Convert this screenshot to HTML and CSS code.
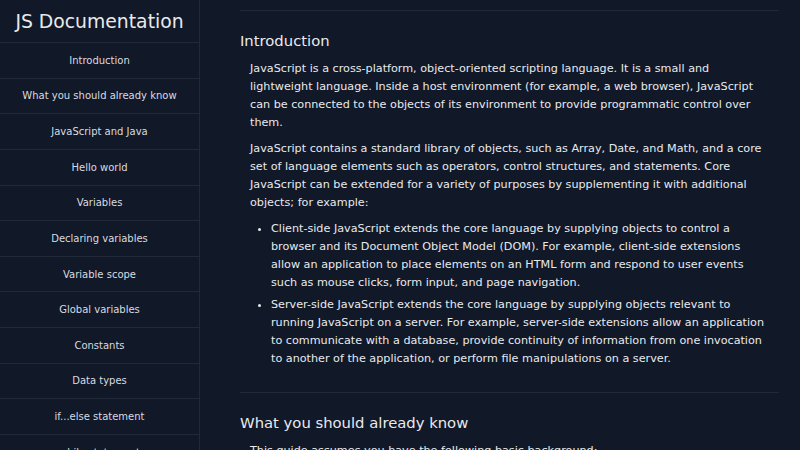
FILE: index.html
```html
<!DOCTYPE html>
<html lang="en">
<head>
<meta charset="utf-8">
<title>JS Documentation</title>
<link rel="stylesheet" href="styles.css">
</head>
<body>
<nav class="sidebar" id="navbar">
  <header class="sidebar-title">JS Documentation</header>
  <ul class="nav-list">
    <li><a class="nav-link" href="#Introduction">Introduction</a></li>
    <li><a class="nav-link" href="#What_you_should_already_know">What you should already know</a></li>
    <li><a class="nav-link" href="#JavaScript_and_Java">JavaScript and Java</a></li>
    <li><a class="nav-link" href="#Hello_world">Hello world</a></li>
    <li><a class="nav-link" href="#Variables">Variables</a></li>
    <li><a class="nav-link" href="#Declaring_variables">Declaring variables</a></li>
    <li><a class="nav-link" href="#Variable_scope">Variable scope</a></li>
    <li><a class="nav-link" href="#Global_variables">Global variables</a></li>
    <li><a class="nav-link" href="#Constants">Constants</a></li>
    <li><a class="nav-link" href="#Data_types">Data types</a></li>
    <li><a class="nav-link" href="#if...else_statement">if...else statement</a></li>
    <li><a class="nav-link" href="#while_statement">while statement</a></li>
    <li><a class="nav-link" href="#Function_declarations">Function declarations</a></li>
    <li><a class="nav-link" href="#Reference">Reference</a></li>
  </ul>
</nav>
<main class="main-doc" id="main-doc">
  <section class="main-section" id="Introduction">
    <h2 class="section-title">Introduction</h2>
    <p class="text">JavaScript is a cross-platform, object-oriented scripting language. It is a small and lightweight language. Inside a host environment (for example, a web browser), JavaScript can be connected to the objects of its environment to provide programmatic control over them.</p>
    <p class="text">JavaScript contains a standard library of objects, such as Array, Date, and Math, and a core set of language elements such as operators, control structures, and statements. Core JavaScript can be extended for a variety of purposes by supplementing it with additional objects; for example:</p>
    <ul class="bullets">
      <li>Client-side JavaScript extends the core language by supplying objects to control a browser and its Document Object Model (DOM). For example, client-side extensions allow an application to place elements on an HTML form and respond to user events such as mouse clicks, form input, and page navigation.</li>
      <li>Server-side JavaScript extends the core language by supplying objects relevant to running JavaScript on a server. For example, server-side extensions allow an application to communicate with a database, provide continuity of information from one invocation to another of the application, or perform file manipulations on a server.</li>
    </ul>
  </section>
  <section class="main-section" id="What_you_should_already_know">
    <h2 class="section-title">What you should already know</h2>
    <p class="text">This guide assumes you have the following basic background:</p>
    <ul class="bullets">
      <li>A general understanding of the Internet and the World Wide Web (WWW).</li>
      <li>Good working knowledge of HyperText Markup Language (HTML).</li>
      <li>Some programming experience. If you are new to programming, try one of the tutorials linked on the main page about JavaScript.</li>
    </ul>
  </section>
</main>
</body>
</html>
```

FILE: styles.css
```css
html, body {
  margin: 0;
  height: 100%;
}

body {
  display: flex;
  overflow: hidden;
  background: #111827;
  color: #e8eaee;
  font-family: "DejaVu Sans", "Noto Sans", sans-serif;
}

.sidebar {
  flex: 0 0 200px;
  box-sizing: border-box;
  border-right: 1px solid #1f2937;
  height: 100%;
  overflow: hidden;
}

.sidebar-title {
  height: 42px;
  display: flex;
  align-items: center;
  justify-content: center;
  font-size: 18.8px;
  color: #e8eaee;
  border-bottom: 1px solid #1f2937;
}

.nav-list {
  list-style: none;
  margin: 0;
  padding: 0;
}

.nav-list li {
  border-bottom: 1px solid #1f2937;
}

.nav-link {
  height: 34.64px;
  display: flex;
  align-items: center;
  justify-content: center;
  font-size: 10px;
  color: #d8dbe0;
  text-decoration: none;
}

.main-doc {
  flex: 1 1 auto;
  height: 100%;
  overflow: hidden;
  padding: 10px 21px 0 40px;
}

.main-section {
  border-top: 1px solid #1f2937;
  padding: 21px 0 24px;
}

.section-title {
  margin: 0 0 10px;
  font-size: 14.8px;
  line-height: 1.2;
  font-weight: normal;
  color: #e8eaee;
}

.text {
  margin: 0 10px 8px 10px;
  font-size: 11.2px;
  line-height: 18px;
}

.bullets {
  margin: 0 10px 0 10px;
  padding-left: 21px;
  font-size: 11.2px;
  line-height: 18px;
}

.bullets li + li {
  margin-top: 4px;
}
```
